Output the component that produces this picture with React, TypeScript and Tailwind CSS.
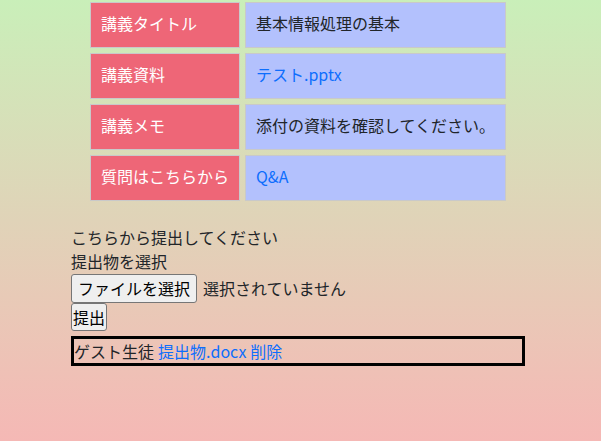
import React from "react";

const rows: { label: string; value: string; link?: boolean }[] = [
  { label: "講義タイトル", value: "基本情報処理の基本" },
  { label: "講義資料", value: "テスト.pptx", link: true },
  { label: "講義メモ", value: "添付の資料を確認してください。" },
  { label: "質問はこちらから", value: "Q&A", link: true },
];

export default function App() {
  return (
    <div
      className="min-h-[441px] w-full bg-gradient-to-b from-[#c9efb9] via-[#e0d3b8] to-[#f5b8b5] text-[16px] text-[#212529]"
      style={{ fontFamily: '"Noto Sans CJK JP", "Noto Sans", sans-serif' }}
    >
      <div className="ml-[71px] w-[454px] pt-[2px]">
        <div className="mx-auto grid w-[416px] grid-cols-[150px_261px] gap-[5px]">
          {rows.map((r) => (
            <React.Fragment key={r.label}>
              <div className="flex h-[46px] items-center whitespace-nowrap border border-[#c9c9c9] bg-[#ee6677] px-[10px] pb-[3px] leading-[23px] text-white">
                {r.label}
              </div>
              <div className="flex h-[46px] items-center whitespace-nowrap border border-[#c9c9c9] bg-[#b3c1fd] pl-[10px] pb-[3px] leading-[23px]">
                {r.link ? (
                  <a className="text-[#0d6efd]">{r.value}</a>
                ) : (
                  <span>{r.value}</span>
                )}
              </div>
            </React.Fragment>
          ))}
        </div>
        <div className="mt-[24px] leading-[24px]">こちらから提出してください</div>
        <div className="leading-[24px]">提出物を選択</div>
        <div className="flex h-[30px] items-center">
          <button className="flex h-[29px] w-[126px] items-center justify-center rounded-[3px] border border-[#767676] bg-[#efefef] leading-[23px] text-black">
            ファイルを選択
          </button>
          <span className="ml-[6px] leading-[23px]">選択されていません</span>
        </div>
        <button className="flex h-[28px] w-[36px] items-center justify-center rounded-[3px] border border-[#767676] bg-[#efefef] leading-[23px] text-black">
          提出
        </button>
        <div className="mt-[5px] flex h-[30px] items-center border-[3px] border-black leading-[23px]">
          <span>ゲスト生徒</span>
          <a className="ml-[4px] text-[#0d6efd]">提出物.docx</a>
          <a className="ml-[4px] text-[#0d6efd]">削除</a>
        </div>
      </div>
    </div>
  );
}
